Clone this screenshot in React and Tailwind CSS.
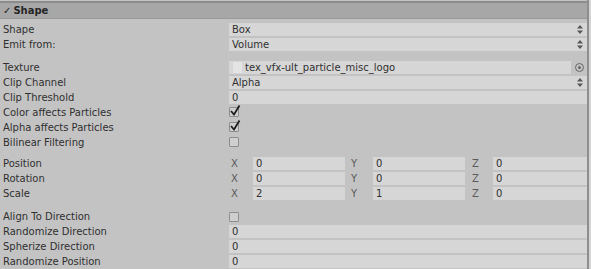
import React from 'react';

const font = { fontFamily: '"DejaVu Sans", "Liberation Sans", sans-serif' };

const Arrows = () => (
    <svg width="6" height="9" viewBox="0 0 6 9" className="ml-auto mr-[4px]">
        <path d="M3 0 L6 3.5 H0 Z" fill="#555" />
        <path d="M3 9 L6 5.5 H0 Z" fill="#555" />
    </svg>
);

const Check = ({ on }) => (
    <div className="relative w-[10px] h-[10px] border border-[#8e8e8e] bg-[#cfcfcf] rounded-[1px]">
        {on && (
            <svg width="12" height="12" viewBox="0 0 12 12" className="absolute left-[-1px] top-[-4px]">
                <path d="M2 7 L5 10.5 L10.5 1.5" stroke="#1e1e1e" strokeWidth="1.8" fill="none" />
            </svg>
        )}
    </div>
);

const Row = ({ label, children }) => (
    <div className="flex items-center h-[15px]">
        <div className="w-[229px] pl-[3px] text-[#303030] truncate">{label}</div>
        <div className="flex-1 flex items-center h-full">{children}</div>
    </div>
);

const Field = ({ children, className = '' }) => (
    <div className={`flex items-center h-[13px] bg-[#d6d6d6] pl-[3px] ${className}`}>{children}</div>
);

const Vec = ({ x, y, z }) => (
    <div className="flex items-center h-full w-full">
        <span className="w-[24px] pl-[2px] text-[#5a5a5a]">X</span>
        <Field className="w-[92px]">{x}</Field>
        <span className="w-[28px] pl-[6px] text-[#5a5a5a]">Y</span>
        <Field className="w-[92px]">{y}</Field>
        <span className="w-[28px] pl-[7px] text-[#5a5a5a]">Z</span>
        <Field className="flex-1">{z}</Field>
    </div>
);

export default function App() {
    return (
        <div className="w-[591px] h-[269px] bg-[#c3c3c3] overflow-hidden text-[10px] text-[#303030] flex" style={font}>
            <div className="flex-1 flex flex-col pt-[1px]">
                <div className="h-[2px] bg-[#8c8c8c]" />
                <div className="h-[16px] bg-[#a7a7a7] border-b border-[#999] flex items-center pl-[3px] font-bold text-[#262626]">
                    <span className="mr-[2px]">✓</span>Shape
                </div>
                <div className="h-[3px]" />
                <Row label="Shape"><Field className="w-full">Box<Arrows /></Field></Row>
                <Row label="Emit from:"><Field className="w-full">Volume<Arrows /></Field></Row>
                <div className="h-[8px]" />
                <Row label="Texture">
                    <Field className="flex-1 pl-[4px]">
                        <div className="w-[9px] h-[11px] bg-[#e4e4e4] mr-[3px]" />
                        tex_vfx-ult_particle_misc_logo
                    </Field>
                    <div className="w-[16px] flex justify-center">
                        <div className="w-[9px] h-[9px] rounded-full border border-[#666] flex items-center justify-center">
                            <div className="w-[3px] h-[3px] rounded-full bg-[#666]" />
                        </div>
                    </div>
                </Row>
                <Row label="Clip Channel"><Field className="w-full">Alpha<Arrows /></Field></Row>
                <Row label="Clip Threshold"><Field className="w-full">0</Field></Row>
                <Row label="Color affects Particles"><Check on /></Row>
                <Row label="Alpha affects Particles"><Check on /></Row>
                <Row label="Bilinear Filtering"><Check /></Row>
                <div className="h-[7px]" />
                <Row label="Position"><Vec x="0" y="0" z="0" /></Row>
                <Row label="Rotation"><Vec x="0" y="0" z="0" /></Row>
                <Row label="Scale"><Vec x="2" y="1" z="0" /></Row>
                <div className="h-[8px]" />
                <Row label="Align To Direction"><Check /></Row>
                <Row label="Randomize Direction"><Field className="w-full">0</Field></Row>
                <Row label="Spherize Direction"><Field className="w-full">0</Field></Row>
                <Row label="Randomize Position"><Field className="w-full">0</Field></Row>
            </div>
            <div className="w-[2px] bg-[#8e8e8e]" />
            <div className="w-[2px] bg-[#d4d4d4]" />
        </div>
    );
}
